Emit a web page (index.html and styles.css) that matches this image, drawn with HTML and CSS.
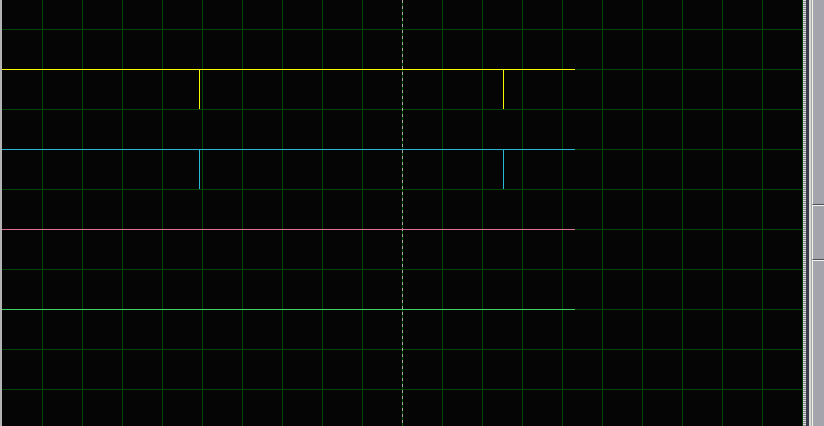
FILE: index.html
```html
<!DOCTYPE html>
<html>
<head>
<meta charset="utf-8">
<title>Waveform</title>
<link rel="stylesheet" href="styles.css">
</head>
<body>
<div class="viewer">
  <div class="wave">
    <svg class="wave-svg" width="801" height="426" viewBox="2 0 801 426" shape-rendering="crispEdges">
      <g class="grid">
        <path d="M42.5 0V426M82.5 0V426M122.5 0V426M162.5 0V426M202.5 0V426M242.5 0V426M282.5 0V426M322.5 0V426M362.5 0V426M442.5 0V426M482.5 0V426M522.5 0V426M562.5 0V426M602.5 0V426M642.5 0V426M682.5 0V426M722.5 0V426M762.5 0V426M802.5 0V426"/>
        <path d="M2 29.5H803M2 69.5H803M2 109.5H803M2 149.5H803M2 189.5H803M2 229.5H803M2 269.5H803M2 309.5H803M2 349.5H803M2 389.5H803"/>
      </g>
      <path class="cursor-base" d="M402.5 0V426"/>
      <path class="cursor-dash" d="M402.5 0V426"/>
      <path class="sig sig-yellow" d="M2 69.5H575M199.5 69V109M503.5 69V109"/>
      <path class="sig sig-cyan" d="M2 149.5H575M199.5 149V189M503.5 149V189"/>
      <path class="sig sig-pink" d="M2 229.5H575"/>
      <path class="sig sig-green" d="M2 309.5H575"/>
    </svg>
  </div>
  <div class="vscroll">
    <div class="stipple"></div>
    <div class="edge-dark"></div>
    <div class="edge-light"></div>
    <div class="trough">
      <div class="seg seg-top"></div>
      <div class="seg seg-thumb"></div>
      <div class="seg seg-bottom"></div>
    </div>
  </div>
</div>
</body>
</html>
```

FILE: styles.css
```css
html, body {
  margin: 0;
  padding: 0;
  background: #000;
  overflow: hidden;
  font-family: "DejaVu Sans", sans-serif;
}

.viewer {
  display: flex;
  width: 824px;
  height: 426px;
}

.wave {
  width: 801px;
  height: 426px;
  border-left: 2px solid #b4b4b4;
  background: #050505;
  flex: none;
}

.wave-svg {
  display: block;
}

.grid path {
  stroke: #004400;
  stroke-width: 1;
  fill: none;
}

.cursor-base {
  stroke: #005a00;
  stroke-width: 1;
}

.cursor-dash {
  stroke: #a8a8a8;
  stroke-width: 1;
  stroke-dasharray: 3 3;
}

.sig {
  fill: none;
  stroke-width: 1;
}

.sig-yellow { stroke: #f8f800; }
.sig-cyan { stroke: #28b8d8; }
.sig-pink { stroke: #e07098; }
.sig-green { stroke: #40d068; }

.vscroll {
  flex: 1;
  display: flex;
  height: 426px;
}

.stipple {
  width: 3px;
  background: repeating-linear-gradient(to bottom, #dcdcdc 0 1px, #8c8c94 1px 2px);
}

.edge-dark {
  width: 3px;
  background: #3c3c4c;
}

.edge-light {
  width: 2px;
  background: #d8dcd0;
}

.trough {
  flex: 1;
  display: flex;
  flex-direction: column;
  background: #a4a4ac;
}

.seg {
  box-sizing: border-box;
  border-left: 1px solid #f4f4ec;
  margin-left: 1px;
}

.seg-top {
  height: 204px;
}

.seg-thumb {
  height: 55px;
  border-top: 1px solid #4c4c5c;
  box-shadow: inset 0 1px 0 #f4f4ec;
}

.seg-bottom {
  flex: 1;
  border-top: 1px solid #4c4c5c;
  box-shadow: inset 0 1px 0 #f4f4ec;
}
```
